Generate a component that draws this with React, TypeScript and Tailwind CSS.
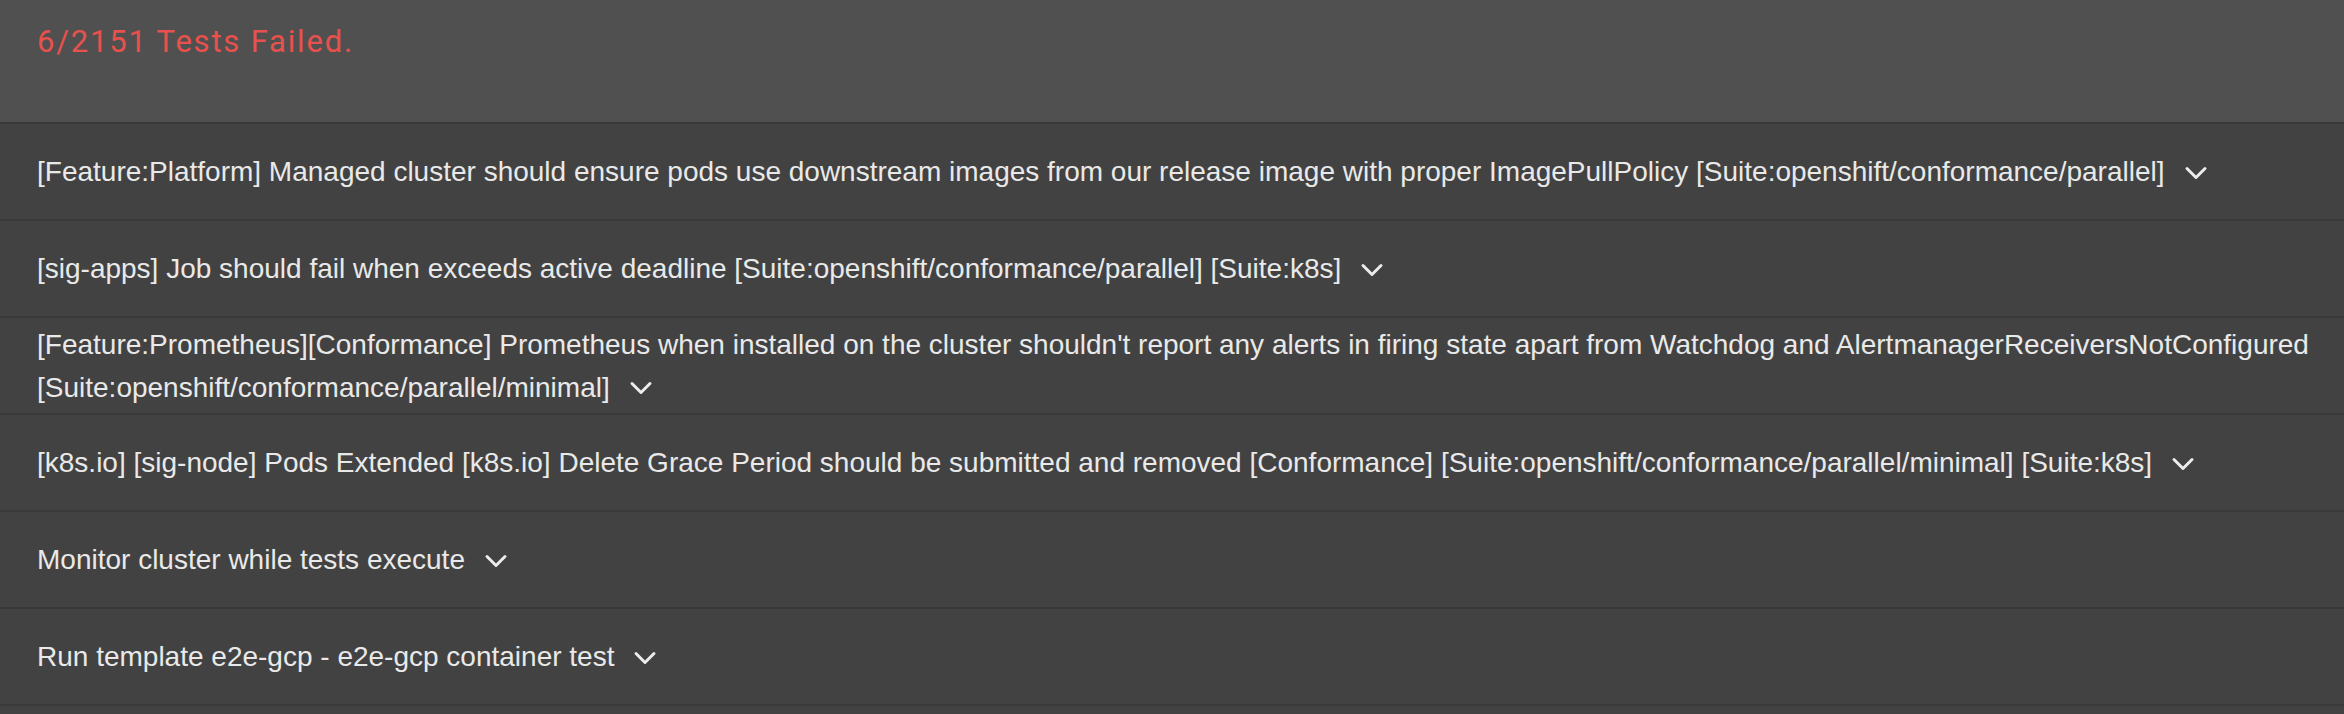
import React from "react";

const rows: string[] = [
  "[Feature:Platform] Managed cluster should ensure pods use downstream images from our release image with proper ImagePullPolicy [Suite:openshift/conformance/parallel]",
  "[sig-apps] Job should fail when exceeds active deadline [Suite:openshift/conformance/parallel] [Suite:k8s]",
  "[Feature:Prometheus][Conformance] Prometheus when installed on the cluster shouldn't report any alerts in firing state apart from Watchdog and AlertmanagerReceiversNotConfigured [Suite:openshift/conformance/parallel/minimal]",
  "[k8s.io] [sig-node] Pods Extended [k8s.io] Delete Grace Period should be submitted and removed [Conformance] [Suite:openshift/conformance/parallel/minimal] [Suite:k8s]",
  "Monitor cluster while tests execute",
  "Run template e2e-gcp - e2e-gcp container test",
];

function Chevron() {
  return (
    <svg
      viewBox="0 0 24 14"
      width="24"
      height="14"
      className="inline-block ml-[19px] align-middle relative -top-[1px]"
      fill="none"
      stroke="#ececec"
      strokeWidth="3"
      strokeLinecap="round"
      strokeLinejoin="round"
    >
      <polyline points="3,2.5 12,11.5 21,2.5" />
    </svg>
  );
}

export default function App() {
  return (
    <div className="w-[2344px] h-[714px] bg-[#424242] overflow-hidden">
      <div className="h-[124px] bg-[#505050] border-b-2 border-[#383838] pl-[37px] pt-[24px]">
        <div
          className="text-[#e8514d] text-[31px] leading-[36px] tracking-[1.8px]"
          style={{ fontFamily: "Roboto, 'Noto Sans', sans-serif" }}
        >
          6/2151 Tests Failed.
        </div>
      </div>
      {rows.map((r, i) => (
        <div
          key={i}
          className="h-[97px] flex items-center border-b-2 border-[#393939] pl-[37px] pr-[20px]"
        >
          <div
            className="text-[28px] leading-[43px] text-[#e9e9e9]"
            style={{ fontFamily: "'Liberation Sans', Arial, sans-serif" }}
          >
            {r}
            <Chevron />
          </div>
        </div>
      ))}
    </div>
  );
}
